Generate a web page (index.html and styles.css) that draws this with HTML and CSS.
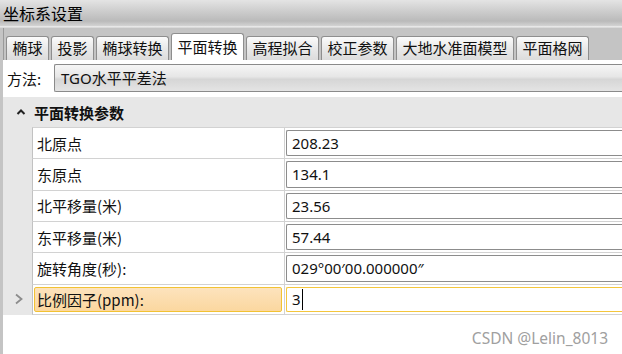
FILE: index.html
```html
<!DOCTYPE html>
<html lang="zh-CN">
<head>
    <meta charset="UTF-8">
    <meta name="viewport" content="width=device-width, initial-scale=1.0">
    <title>坐标系设置</title>
    <link rel="stylesheet" href="styles.css">
</head>
<body>

<div class="window">
    <div class="titlebar">坐标系设置</div>

    <div class="frame">
        <div class="tabs">
            <div class="tab">椭球</div>
            <div class="tab">投影</div>
            <div class="tab">椭球转换</div>
            <div class="tab active">平面转换</div>
            <div class="tab">高程拟合</div>
            <div class="tab">校正参数</div>
            <div class="tab">大地水准面模型</div>
            <div class="tab">平面格网</div>
        </div>

        <div class="page">
            <div class="method-row">
                <span class="method-label">方法:</span>
                <div class="combo">TGO水平平差法</div>
            </div>

            <div class="propgrid">
                <div class="category">
                    <svg class="caret" width="10" height="8" viewBox="0 0 10 8">
                        <polyline points="1.5,6 5,2.5 8.5,6" fill="none" stroke="#222" stroke-width="2"/>
                    </svg>
                    平面转换参数
                </div>

                <div class="prop-row">
                    <div class="gutter"></div>
                    <div class="name">北原点</div>
                    <div class="value"><div class="value-box">208.23</div></div>
                </div>
                <div class="prop-row">
                    <div class="gutter"></div>
                    <div class="name">东原点</div>
                    <div class="value"><div class="value-box">134.1</div></div>
                </div>
                <div class="prop-row">
                    <div class="gutter"></div>
                    <div class="name">北平移量(米)</div>
                    <div class="value"><div class="value-box">23.56</div></div>
                </div>
                <div class="prop-row">
                    <div class="gutter"></div>
                    <div class="name">东平移量(米)</div>
                    <div class="value"><div class="value-box">57.44</div></div>
                </div>
                <div class="prop-row">
                    <div class="gutter"></div>
                    <div class="name">旋转角度(秒):</div>
                    <div class="value"><div class="value-box">029°00′00.000000″</div></div>
                </div>
                <div class="prop-row selected">
                    <div class="gutter">
                        <svg class="row-arrow" width="12" height="12" viewBox="0 0 12 12">
                            <polyline points="3,1.5 8.5,6 3,10.5" fill="none" stroke="#8c8c8c" stroke-width="1.8"/>
                        </svg>
                    </div>
                    <div class="name"><span class="name-hl">比例因子(ppm):</span></div>
                    <div class="value"><div class="value-box">3<span class="cursor"></span></div></div>
                </div>
            </div>

            <div class="watermark">CSDN @Lelin_8013</div>
        </div>
    </div>
</div>

</body>
</html>
```

FILE: styles.css
```css
* {
    box-sizing: border-box;
    margin: 0;
    padding: 0;
}

body {
    width: 622px;
    height: 354px;
    overflow: hidden;
    background-color: #c6c6c6;
    font-family: "Noto Sans", "Noto Sans CJK SC", sans-serif;
    font-size: 15px;
    color: #111;
}

.window {
    display: flex;
    flex-direction: column;
    height: 354px;
}

.titlebar {
    height: 28px;
    padding-left: 3px;
    line-height: 26px;
    font-family: "Noto Sans CJK SC", sans-serif;
    font-size: 16px;
    color: #000;
    background: linear-gradient(#e4e4e4, #cdcdcd 40%, #bababa 75%, #d2d2d2 92%, #f2f2f2 96%, #c6c6c6);
}

.frame {
    flex: 1;
    display: flex;
    flex-direction: column;
    padding-left: 3px;
    background-color: #c4c4c4;
}

.tabs {
    display: flex;
    align-items: flex-end;
    gap: 2px;
    height: 32px;
    padding-left: 2px;
    border-left: 1px solid #9a9a9a;
}

.tab {
    height: 24px;
    padding: 0 5.5px;
    line-height: 22px;
    font-family: "Noto Sans CJK SC", sans-serif;
    border: 1px solid #8e8e8e;
    border-bottom: none;
    border-radius: 3px 3px 0 0;
    background: linear-gradient(#fbfbfb, #e9e9e9 50%, #dcdcdc);
}

.tab.active {
    height: 27px;
    line-height: 26px;
    background: #fff;
}

.page {
    flex: 1;
    position: relative;
    background-color: #fff;
}

.method-row {
    display: flex;
    align-items: center;
    gap: 0;
    padding: 4px 0 0 4px;
    margin-bottom: 5px;
}

.method-label {
    width: 47px;
    font-family: "Noto Sans CJK SC", sans-serif;
}

.combo {
    flex: 1;
    height: 28px;
    padding-left: 6px;
    line-height: 26px;
    border: 1px solid #8a8a8a;
    border-right: none;
    border-radius: 2px 0 0 2px;
    background: linear-gradient(#f6f6f6, #e6e6e6 45%, #d6d6d6 55%, #e4e4e4);
}

.propgrid {
    background-color: #e7e7e7;
}

.category {
    display: flex;
    align-items: center;
    height: 30px;
    padding-left: 13px;
    font-family: "Noto Sans CJK SC", sans-serif;
    font-weight: bold;
}

.caret {
    margin-right: 8px;
    margin-top: -1px;
}

.prop-row {
    display: flex;
    height: 31.33px;
}

.gutter {
    width: 29px;
    display: flex;
    align-items: center;
    padding-left: 10px;
}

.name {
    width: 253px;
    display: flex;
    align-items: center;
    padding-left: 4px;
    font-family: "Noto Sans CJK SC", sans-serif;
    background-color: #fff;
    border-left: 1px solid #c2c2c2;
    border-right: 1px solid #d2d2d2;
    border-top: 1px solid #d2d2d2;
}

.value {
    flex: 1;
    padding: 2px 0 2px 1px;
    background-color: #fff;
    border-top: 1px solid #d2d2d2;
}

.prop-row:first-of-type .name,
.prop-row:first-of-type .value {
    border-top-color: #c2c2c2;
}

.prop-row:last-child .name,
.prop-row:last-child .value {
    border-bottom: 1px solid #d2d2d2;
}

.value-box {
    height: 100%;
    display: flex;
    align-items: center;
    padding-left: 5px;
    border: 1px solid #8c8c8c;
    border-right: none;
    border-radius: 2px 0 0 2px;
}

.prop-row.selected .name {
    padding: 2px 2px 2px 1px;
}

.name-hl {
    flex: 1;
    height: 100%;
    display: flex;
    align-items: center;
    padding-left: 2px;
    border: 1px solid #f2c233;
    border-radius: 2px;
    background: linear-gradient(#fde3bd, #fbd79f);
}

.prop-row.selected .value-box {
    border-color: #f4c63c;
}

.cursor {
    display: inline-block;
    width: 1px;
    height: 21px;
    margin-left: 1px;
    background-color: #000;
}

.watermark {
    position: absolute;
    right: 14px;
    bottom: 5px;
    font-family: "Noto Sans", sans-serif;
    font-size: 15.5px;
    color: #a0a0a0;
}
```
